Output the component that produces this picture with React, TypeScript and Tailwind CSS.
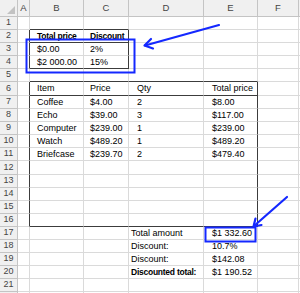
import React from "react";

type Cell = { t: string; b?: boolean };

const COLS = ["A", "B", "C", "D", "E", "F", "G"];
const ROWS = Array.from({ length: 22 }, (_, i) => i + 1);

// sheet contents, keyed "row:col"
const DATA: Record<string, Cell> = {
  "2:B": { t: "Total price", b: true },
  "2:C": { t: "Discount", b: true },
  "3:B": { t: "$0.00" },
  "3:C": { t: "2%" },
  "4:B": { t: "$2 000.00" },
  "4:C": { t: "15%" },
  "6:B": { t: "Item" },
  "6:C": { t: "Price" },
  "6:D": { t: "Qty" },
  "6:E": { t: "Total price" },
  "7:B": { t: "Coffee" },
  "7:C": { t: "$4.00" },
  "7:D": { t: "2" },
  "7:E": { t: "$8.00" },
  "8:B": { t: "Echo" },
  "8:C": { t: "$39.00" },
  "8:D": { t: "3" },
  "8:E": { t: "$117.00" },
  "9:B": { t: "Computer" },
  "9:C": { t: "$239.00" },
  "9:D": { t: "1" },
  "9:E": { t: "$239.00" },
  "10:B": { t: "Watch" },
  "10:C": { t: "$489.20" },
  "10:D": { t: "1" },
  "10:E": { t: "$489.20" },
  "11:B": { t: "Briefcase" },
  "11:C": { t: "$239.70" },
  "11:D": { t: "2" },
  "11:E": { t: "$479.40" },
  "17:D": { t: "Total amount" },
  "17:E": { t: "$1 332.60" },
  "18:D": { t: "Discount:" },
  "18:E": { t: "10.7%" },
  "19:D": { t: "Discount:" },
  "19:E": { t: "$142.08" },
  "20:D": { t: "Discounted total:", b: true },
  "20:E": { t: "$1 190.52" },
};

function darkRight(r: number, c: string) {
  if (r >= 2 && r <= 4 && (c === "A" || c === "C")) return true;
  if (r >= 6 && r <= 16 && (c === "A" || c === "E")) return true;
  return false;
}

function darkBottom(r: number, c: string) {
  if ((r === 1 || r === 2 || r === 4) && (c === "B" || c === "C")) return true;
  if ((r === 5 || r === 6 || r === 16) && ["B", "C", "D", "E"].includes(c)) return true;
  return false;
}

function padding(r: number, c: string) {
  if (c === "B") return "pl-[7px]";
  if (c === "C") return "pl-[6px]";
  if (c === "D") return r >= 17 ? "pl-[2px]" : "pl-[8px]";
  if (c === "E") return "pl-[8px]";
  return "pl-[2px]";
}

function SheetCell({ r, c }: { r: number; c: string }) {
  const cell = DATA[`${r}:${c}`];
  return (
    <div
      className={[
        "border-r border-b flex items-center whitespace-nowrap overflow-visible text-black leading-none",
        darkRight(r, c) ? "border-r-[#3c3c3c]" : "border-r-[#dadada]",
        darkBottom(r, c) ? "border-b-[#3c3c3c]" : "border-b-[#dadada]",
        padding(r, c),
        cell?.b ? "font-bold text-[8.5px] tracking-[-0.25px]" : "",
      ].join(" ")}
    >
      {cell?.t}
    </div>
  );
}

function Arrows() {
  return (
    <svg className="absolute inset-0 pointer-events-none" width="300" height="293" viewBox="0 0 300 293">
      <rect x="26.5" y="39.5" width="108" height="33" fill="none" stroke="#1428ff" strokeWidth="2" />
      <rect x="205.5" y="227.5" width="50" height="14" fill="none" stroke="#1428ff" strokeWidth="2" />
      <g stroke="#1428ff" strokeWidth="2.2" strokeLinecap="round" fill="none">
        <line x1="219" y1="25" x2="145" y2="45.5" />
        <polyline points="151,39 144.5,45.5 153,48.5" strokeLinejoin="round" />
        <line x1="287" y1="197" x2="254" y2="226" />
        <polyline points="255.5,218.5 253.5,226.5 261.5,225" strokeLinejoin="round" />
      </g>
    </svg>
  );
}

export default function App() {
  return (
    <div className="relative w-[300px] h-[293px] overflow-hidden bg-white font-['Liberation_Sans',Arial,sans-serif] text-[9px]">
      <div className="grid grid-cols-[18px_12px_54px_45px_75px_54px_41px_1fr] grid-rows-[17px_13px_13px_13px_13px_13px_14px_13px_13px_13px_13px_13px_14px_13px_13px_13px_13px_13px_13px_13px_13px_13px_13px]">
        {/* corner */}
        <div className="relative bg-[#f0f0f0] border-r border-b border-[#c4c4c4]">
          <svg className="absolute right-[2px] bottom-[2px]" width="8" height="8" viewBox="0 0 8 8">
            <polygon points="8,0 8,8 0,8" fill="#c2c2c2" />
          </svg>
        </div>
        {COLS.map((c) => (
          <div
            key={c}
            className="bg-[#f0f0f0] border-r border-b border-[#c4c4c4] text-[#444] flex items-center justify-center text-[9.5px]"
          >
            {c === "G" ? "" : c}
          </div>
        ))}
        {ROWS.map((r) => (
          <React.Fragment key={r}>
            <div className="bg-[#f0f0f0] border-r border-b border-[#c4c4c4] text-[#444] flex items-center justify-center">
              {r === 22 ? "" : r}
            </div>
            {COLS.map((c) => (
              <SheetCell key={c} r={r} c={c} />
            ))}
          </React.Fragment>
        ))}
      </div>
      <Arrows />
    </div>
  );
}
